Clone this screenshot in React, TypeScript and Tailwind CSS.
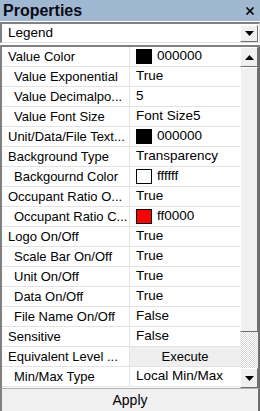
import { X } from 'lucide-react';

type Row = {
  name: string;
  indent?: boolean;
  value: string;
  swatch?: string;
  button?: boolean;
};

const rows: Row[] = [
  { name: 'Value Color', value: '000000', swatch: 'bg-black' },
  { name: 'Value Exponential', indent: true, value: 'True' },
  { name: 'Value Decimalpo...', indent: true, value: '5' },
  { name: 'Value Font Size', indent: true, value: 'Font Size5' },
  { name: 'Unit/Data/File Text...', value: '000000', swatch: 'bg-black' },
  { name: 'Background Type', value: 'Transparency' },
  { name: 'Backgournd Color', indent: true, value: 'ffffff', swatch: 'bg-white' },
  { name: 'Occupant Ratio O...', value: 'True' },
  { name: 'Occupant Ratio C...', indent: true, value: 'ff0000', swatch: 'bg-[#ff0000]' },
  { name: 'Logo On/Off', value: 'True' },
  { name: 'Scale Bar On/Off', indent: true, value: 'True' },
  { name: 'Unit On/Off', indent: true, value: 'True' },
  { name: 'Data On/Off', indent: true, value: 'True' },
  { name: 'File Name On/Off', indent: true, value: 'False' },
  { name: 'Sensitive', value: 'False' },
  { name: 'Equivalent Level ...', value: 'Execute', button: true },
  { name: 'Min/Max Type', indent: true, value: 'Local Min/Max' },
];

// small 3d button with a triangle
function ArrowButton({ up = false, className = '' }: { up?: boolean; className?: string }) {
  return (
    <div
      className={`flex items-center justify-center bg-[#f0f0f0] border border-t-white border-l-white border-r-[#707070] border-b-[#707070] ${className}`}
    >
      <svg width="9" height="5" viewBox="0 0 9 5">
        {up ? <polygon points="0,5 9,5 4.5,0" fill="#000" /> : <polygon points="0,0 9,0 4.5,5" fill="#000" />}
      </svg>
    </div>
  );
}

export default function App() {
  return (
    <div className="w-[260px] h-[411px] flex flex-col bg-white overflow-hidden text-[13px] text-black" style={{ fontFamily: '"Liberation Sans", Arial, sans-serif' }}>
      {/* Title bar */}
      <div className="h-[21px] flex items-center justify-between bg-[#9fb7d1] pl-[3px] pr-[4px]">
        <span className="font-bold text-[16px] text-[#0a0a14]">Properties</span>
        <X className="w-[12px] h-[12px]" strokeWidth={3.5} />
      </div>

      {/* Object combobox */}
      <div className="h-[24px] pt-[1px] pb-[2px] bg-white">
        <div className="h-full flex items-center border-t-2 border-l-2 border-t-[#808080] border-l-[#808080] border-r border-r-[#e0e0e0] border-b border-b-[#e0e0e0]">
          <span className="flex-1 pl-[6px] text-[13.5px]">Legend</span>
          <ArrowButton className="w-[18px] h-[17px] mr-[1px]" />
        </div>
      </div>

      {/* Property grid */}
      <div className="flex-1 flex border-t-2 border-l-2 border-t-[#808080] border-l-[#808080]">
        <div className="flex-1 flex flex-col">
          {rows.map((r) => (
            <div key={r.name} className="h-[20px] flex border-b border-[#e3e3e3]">
              <div className={`w-[128px] shrink-0 border-r border-[#e3e3e3] flex items-center whitespace-nowrap overflow-hidden ${r.indent ? 'pl-[12px]' : 'pl-[6px]'}`}>
                {r.name}
              </div>
              {r.button ? (
                <div className="flex-1 flex items-center justify-center bg-[#efefef]">{r.value}</div>
              ) : (
                <div className="flex-1 flex items-center pl-[6px] gap-[5px] whitespace-nowrap text-[13.5px]">
                  {r.swatch && <span className={`w-[16px] h-[15px] border border-black ${r.swatch}`} />}
                  <span>{r.value}</span>
                </div>
              )}
            </div>
          ))}
        </div>

        {/* Scrollbar */}
        <div className="w-[18px] flex flex-col border-r-2 border-r-[#6e6e6e] box-content">
          <ArrowButton up className="h-[20px]" />
          <div className="h-[265px] bg-[#f0f0f0] border border-t-white border-l-white border-r-[#707070] border-b-[#707070]" />
          <div className="flex-1 bg-[repeating-conic-gradient(#d8d8d8_0_25%,#ffffff_0_50%)] bg-size-[2px_2px]" />
          <ArrowButton className="h-[20px]" />
        </div>
      </div>

      {/* Apply */}
      <div className="h-[23px] flex items-center justify-center bg-[#f0f0f0] border-t border-[#b0b0b0] border-l-2 border-l-[#808080] border-r-2 border-r-[#6e6e6e] text-[14px]">
        Apply
      </div>
    </div>
  );
}
